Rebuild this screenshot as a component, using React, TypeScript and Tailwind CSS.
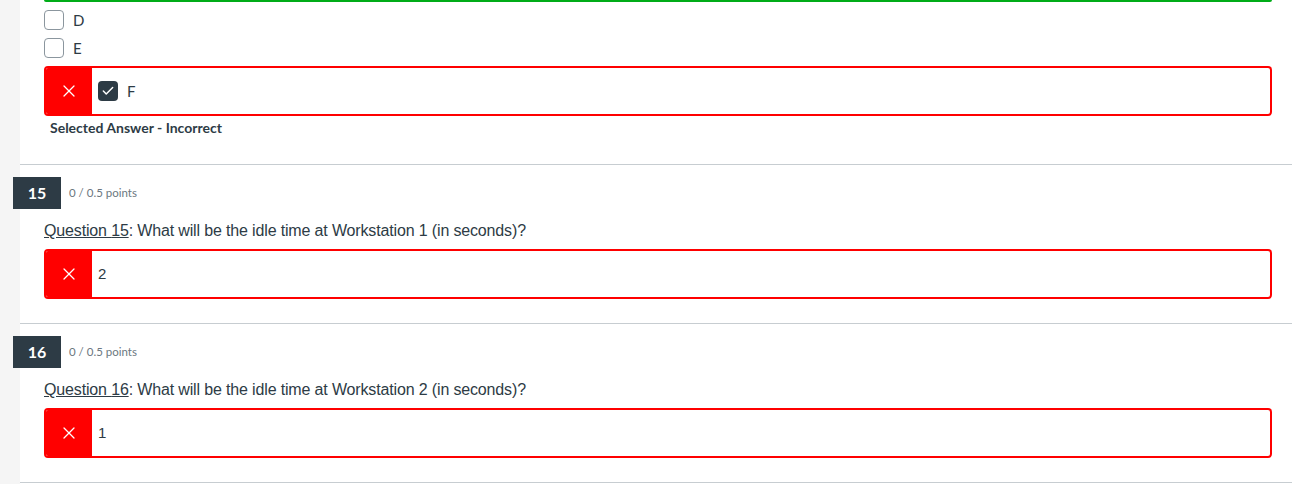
import React from "react";
import { X, Check } from "lucide-react";

const lato = "font-['Lato','Noto_Sans',sans-serif]";
const helv = "font-['Liberation_Sans','Arial',sans-serif]";

function EmptyBox({ label }: { label: string }) {
  return (
    <div className="flex items-center h-[28px]">
      <span className="w-[20px] h-[20px] rounded-[4px] border border-[#8b969e] bg-white" />
      <span className={`ml-[9px] text-[15px] text-[#2d3b45] ${lato}`}>{label}</span>
    </div>
  );
}

function WrongAnswer({ children }: { children: React.ReactNode }) {
  return (
    <div className="flex h-[50px] rounded-[4px] border-2 border-[#ff0000] overflow-hidden">
      <div className="w-[46px] bg-[#ff0000] flex items-center justify-center">
        <X size={20} strokeWidth={1.5} className="text-white" />
      </div>
      <div className="flex items-center pl-[6px]">{children}</div>
    </div>
  );
}

function Question({ num, text }: { num: number; text: string }) {
  const answer = num === 15 ? "2" : "1";
  return (
    <section className="pt-[12px] pb-[24px] border-b border-[#c7cdd1]">
      <div className="flex items-center">
        <div
          className={`w-[48px] h-[32px] -ml-[7px] bg-[#2d3b45] text-white flex items-center justify-center text-[16px] font-bold ${lato}`}
        >
          {num}
        </div>
        <span className={`ml-[8px] text-[11.5px] text-[#6b7780] ${lato}`}>0 / 0.5 points</span>
      </div>
      <p className={`mt-[10px] pl-[24px] text-[16px] leading-[24px] tracking-[-0.15px] text-[#2d3b45] ${helv}`}>
        <span className="underline">Question {num}</span>: {text}
      </p>
      <div className="mt-[6px] ml-[24px] mr-[20px]">
        <WrongAnswer>
          <span className={`text-[15px] text-[#2d3b45] ${helv}`}>{answer}</span>
        </WrongAnswer>
      </div>
    </section>
  );
}

export default function App() {
  return (
    <div className="flex h-[484px] overflow-hidden bg-white">
      <div className="w-[20px] shrink-0 bg-[#f5f5f5]" />
      <main className="flex-1">
        <section className="border-b border-[#c7cdd1] pb-[26px]">
          <div className="ml-[24px] mr-[20px]">
            <div className="h-[2px] bg-[#00ac18] rounded-b-[2px]" />
            <div className="mt-[4px]">
              <EmptyBox label="D" />
              <EmptyBox label="E" />
            </div>
            <div className="mt-[4px]">
              <WrongAnswer>
                <span className="w-[20px] h-[20px] rounded-[4px] bg-[#2d3b45] flex items-center justify-center">
                  <Check size={14} strokeWidth={2.5} className="text-white" />
                </span>
                <span className={`ml-[9px] text-[15px] text-[#2d3b45] ${lato}`}>F</span>
              </WrongAnswer>
            </div>
            <p className={`mt-[2px] pl-[6px] text-[14px] leading-[20px] font-bold text-[#2d3b45] ${lato}`}>
              Selected Answer - Incorrect
            </p>
          </div>
        </section>
        <Question num={15} text="What will be the idle time at Workstation 1 (in seconds)?" />
        <Question num={16} text="What will be the idle time at Workstation 2 (in seconds)?" />
      </main>
    </div>
  );
}
